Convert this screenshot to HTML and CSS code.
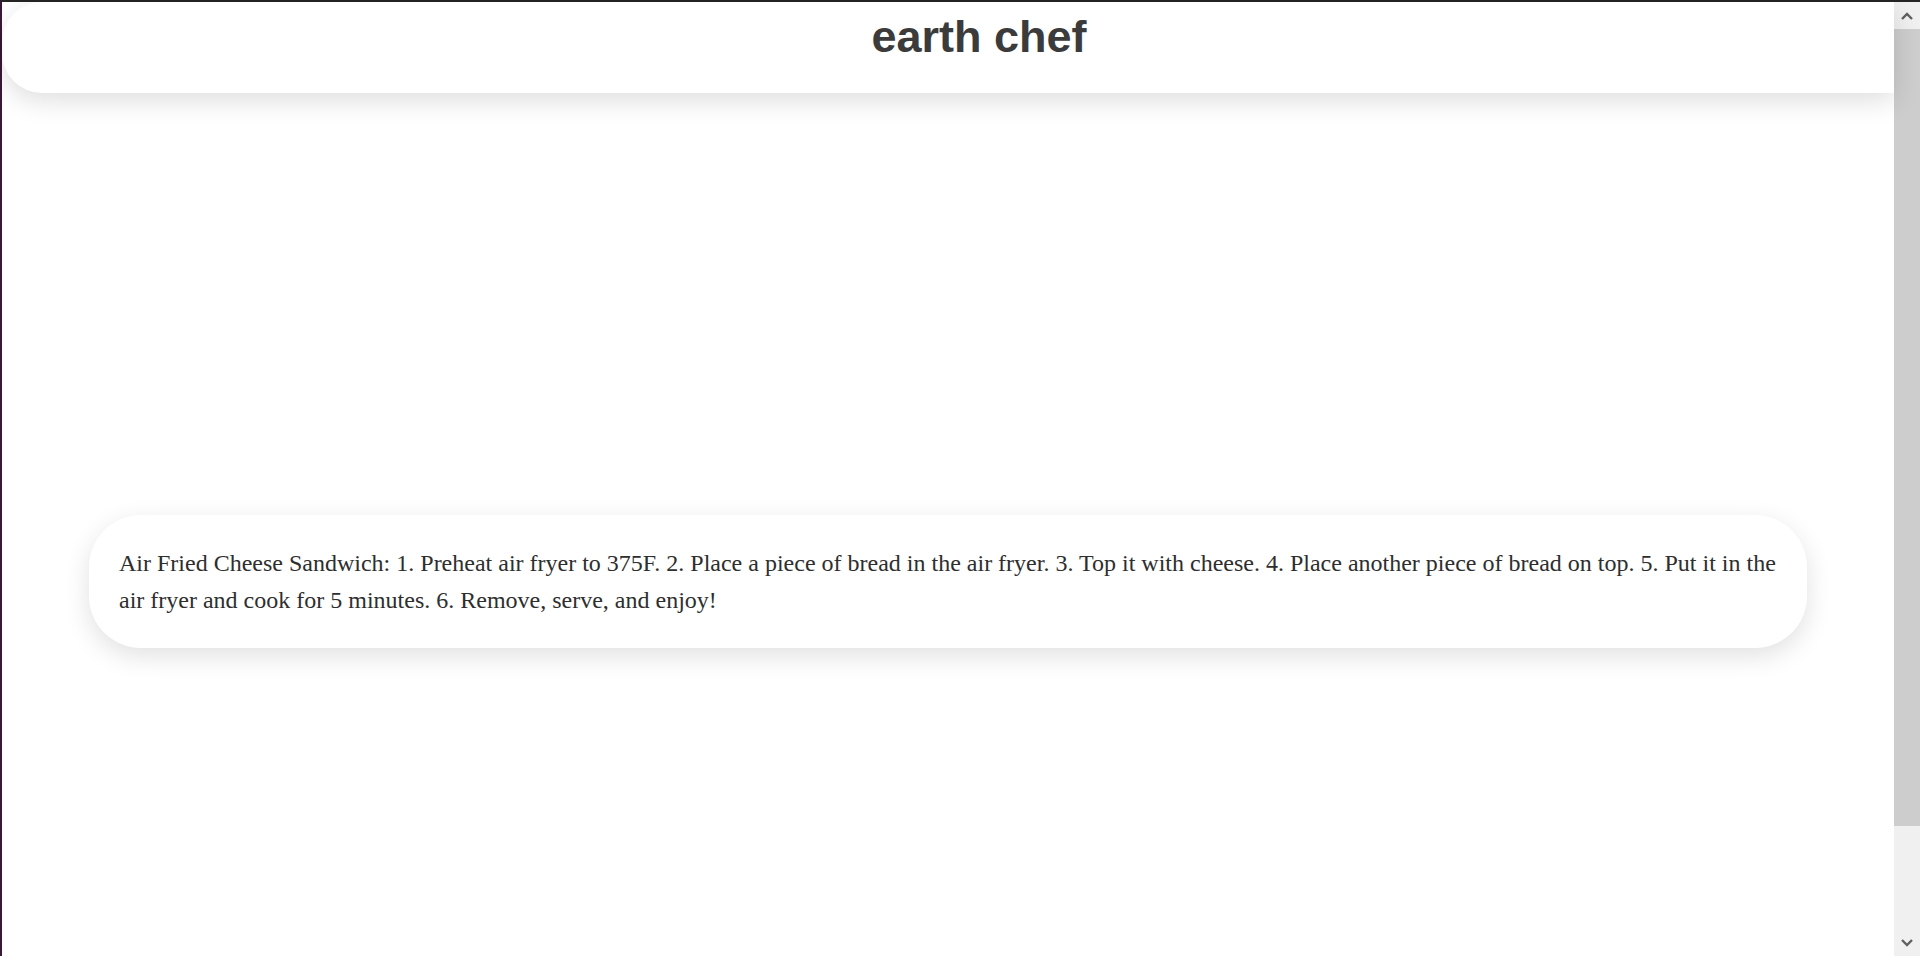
FILE: index.html
```html
<!DOCTYPE html>
<html lang="en">
<head>
<meta charset="utf-8">
<title>earth chef</title>
<link rel="stylesheet" href="styles.css">
</head>
<body>
<div class="frame">
  <div class="page">
    <header class="site-header">
      <h1 class="title">earth chef</h1>
    </header>
    <main class="content">
      <div class="recipe-card">
        <p class="recipe-text">Air Fried Cheese Sandwich: 1. Preheat air fryer to 375F. 2. Place a piece of bread in the air fryer. 3. Top it with cheese. 4. Place another piece of bread on top. 5. Put it in the air fryer and cook for 5 minutes. 6. Remove, serve, and enjoy!</p>
      </div>
    </main>
  </div>
  <div class="scrollbar">
    <div class="sb-btn">
      <svg width="12" height="8" viewBox="0 0 12 8"><path d="M1 7 L6 2 L11 7" fill="none" stroke="#606060" stroke-width="2.4"/></svg>
    </div>
    <div class="sb-thumb"></div>
    <div class="sb-track"></div>
    <div class="sb-btn">
      <svg width="12" height="8" viewBox="0 0 12 8"><path d="M1 1 L6 6 L11 1" fill="none" stroke="#606060" stroke-width="2.4"/></svg>
    </div>
  </div>
</div>
</body>
</html>
```
FILE: styles.css
```css
html, body {
  margin: 0;
  padding: 0;
  height: 956px;
  overflow: hidden;
  background: #ffffff;
}

.frame {
  display: flex;
  height: 956px;
  box-sizing: border-box;
  border-top: 2px solid #252525;
  border-left: 2px solid #3a1837;
}

.page {
  flex: 1;
  display: flex;
  flex-direction: column;
  min-width: 0;
}

.site-header {
  height: 91px;
  box-sizing: border-box;
  padding: 9px 0 0 62px;
  background: #ffffff;
  border-radius: 40px 0 0 40px;
  box-shadow: 0 8px 26px rgba(0, 0, 0, 0.13);
  position: relative;
  z-index: 1;
}

.title {
  margin: 0;
  text-align: center;
  font-family: "Liberation Sans", Arial, sans-serif;
  font-weight: 700;
  font-size: 45px;
  line-height: 52px;
  color: #3b3b3b;
}

.content {
  padding: 422px 87px 0 87px;
}

.recipe-card {
  background: #ffffff;
  border-radius: 52px;
  padding: 30px 30px;
  box-shadow: 0 8px 26px rgba(0, 0, 0, 0.12);
}

.recipe-text {
  margin: 0;
  font-family: "Liberation Serif", "Times New Roman", serif;
  font-size: 24px;
  line-height: 36.5px;
  color: #2e2e2e;
}

.scrollbar {
  width: 26px;
  flex: 0 0 26px;
  display: flex;
  flex-direction: column;
  background: #f0f0f0;
}

.sb-btn {
  height: 27px;
  display: flex;
  align-items: center;
  justify-content: center;
}

.sb-thumb {
  height: 797px;
  background: #cdcdcd;
}

.sb-track {
  flex: 1;
}
```
